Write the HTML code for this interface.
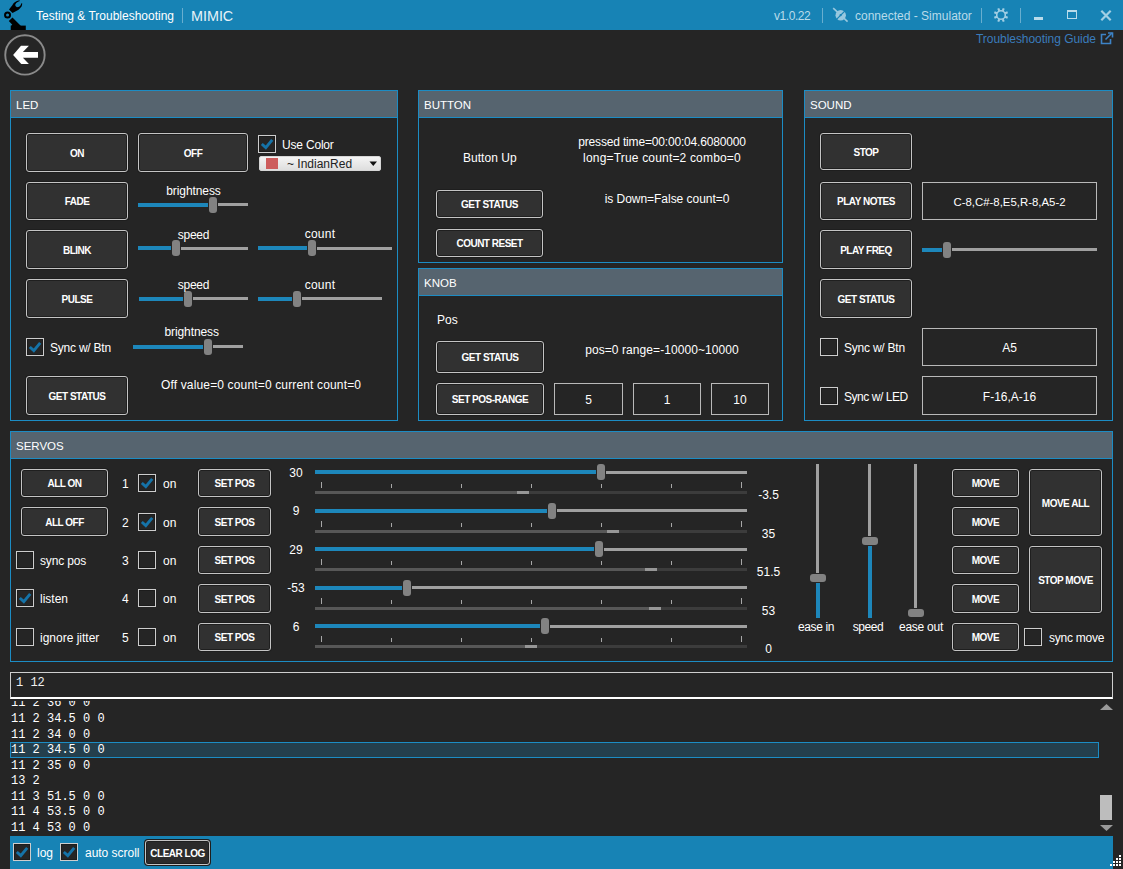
<!DOCTYPE html>
<html><head><meta charset="utf-8"><style>
html,body{margin:0;padding:0;}
body{width:1123px;height:869px;overflow:hidden;background:#252525;position:relative;font-family:"Liberation Sans",sans-serif;}
div{position:absolute;box-sizing:border-box;}
.t{line-height:0;white-space:nowrap;font-family:"Liberation Sans",sans-serif;}
.m{line-height:0;white-space:pre;font-family:"Liberation Mono",monospace;font-size:12px;}
.btn{border:1px solid #c4c4c4;border-radius:3px;background:#313131;box-shadow:0 0 0 1px #1e1e1e, inset 0 0 0 1px #1f1f1f;display:flex;align-items:center;justify-content:center;color:#fff;font-weight:bold;font-size:10px;letter-spacing:-0.5px;white-space:nowrap;}
.btn span{position:relative;top:1px;line-height:12px;}
.panel{border:1px solid #1c8cc4;}
.cb{width:18px;height:18px;border:1px solid #cdcdcd;background:#252525;box-shadow:inset 0 0 0 1px #1c1c1c;}
.tb{border:1px solid #b9b9b9;display:flex;align-items:center;justify-content:center;color:#ffffff;font-size:12px;white-space:nowrap;line-height:14px;padding-top:2px;}
.dd{border:1px solid #d6d6d6;border-radius:2px;background:linear-gradient(#f4f4f4,#dedede);}
</style></head>
<body>
<div style="left:0px;top:0px;width:1123px;height:30px;background:#1783b5;"></div>
<svg style="position:absolute;left:0;top:0" width="30" height="30" viewBox="0 0 30 30">
<g fill="#000">
<path d="M10.7 25.6 L25.8 25.6 L25.8 30 L10.7 30 Z"/>
<path d="M8.8 21 L12.5 17.5 L21 26 L11 26 L12.3 24.7 Z"/>
<circle cx="7.55" cy="15.1" r="2.5" fill="none" stroke="#000" stroke-width="2"/>
<path d="M12.52 13.07 L9.02 9.39 L12.70 4.79 L12.89 4.05 L14.73 2.21 L16.94 1.10 L19.33 0.29 L19.88 1.10 L18.04 1.84 L16.20 2.95 L15.28 4.42 L15.46 6.08 L16.94 7.18 L19.15 6.81 L20.62 5.15 L21.35 3.31 L22.28 3.50 L21.72 6.26 L20.07 8.28 L18.78 9.39 L18.59 9.76 Z"/>
</g></svg>
<div class="t" style="left:36px;top:16px;font-size:12px;color:#ffffff;letter-spacing:-0.004px;">Testing &amp; Troubleshooting</div>
<div style="left:182px;top:8px;width:1px;height:15px;background:rgba(255,255,255,0.35);"></div>
<div class="t" style="left:191px;top:16px;font-size:14.4px;color:#e6f2f8;letter-spacing:-0.025px;">MIMIC</div>
<div class="t" style="left:774px;top:16px;font-size:12px;color:#b9dbea;letter-spacing:-0.433px;">v1.0.22</div>
<div style="left:822px;top:8px;width:1px;height:15px;background:rgba(255,255,255,0.35);"></div>
<svg style="position:absolute;left:828px;top:4px" width="24" height="24" viewBox="0 0 24 24">
<g fill="#98c8df" stroke="none"><line x1="5.2" y1="4.1" x2="19.6" y2="17.7" stroke="#98c8df" stroke-width="1.6"/>
<circle cx="12.7" cy="11.3" r="5.2"/>
<line x1="17" y1="6.8" x2="8.3" y2="15.6" stroke="#1783b5" stroke-width="1.2"/>
<circle cx="12.6" cy="11.2" r="1.1" fill="#1783b5"/></g></svg>
<div class="t" style="left:855px;top:16px;font-size:12px;color:#b9dbea;letter-spacing:0.005px;">connected - Simulator</div>
<div style="left:981px;top:8px;width:1px;height:15px;background:rgba(255,255,255,0.35);"></div>
<svg style="position:absolute;left:988px;top:2px" width="26" height="26" viewBox="0 0 26 26">
<g fill="none" stroke="#a2cfe4"><circle cx="13" cy="13" r="4.3" stroke-width="1.6"/>
<path d="M14.68 8.93 L15.76 6.35 M17.07 11.32 L19.65 10.24 M17.07 14.68 L19.65 15.76 M14.68 17.07 L15.76 19.65 M11.32 17.07 L10.24 19.65 M8.93 14.68 L6.35 15.76 M8.93 11.32 L6.35 10.24 M11.32 8.93 L10.24 6.35 " stroke-width="2.1"/></g></svg>
<div style="left:1020px;top:8px;width:1px;height:15px;background:rgba(255,255,255,0.35);"></div>
<div style="left:1034px;top:17px;width:9px;height:3px;background:#b9dbea;"></div>
<div style="left:1067px;top:10px;width:10px;height:9px;box-sizing:border-box;border:1px solid #b9dbea;border-top-width:2px"></div>
<svg style="position:absolute;left:1100px;top:10px" width="12" height="11" viewBox="0 0 12 11">
<path d="M1.3 0.8 L10.7 10.2 M10.7 0.8 L1.3 10.2" stroke="#a2cfe4" stroke-width="2.2"/></svg>
<svg style="position:absolute;left:3px;top:33px" width="45" height="45" viewBox="0 0 45 45">
<circle cx="21.95" cy="21.9" r="19.7" fill="none" stroke="#8a8a8a" stroke-width="1.9"/>
<path d="M10.1 21.9 L18 12.7 L25.9 12.7 L19.9 18.9 L35 18.9 L35 24.8 L19.9 24.8 L25.9 31 L18.3 31 Z" fill="#fff"/></svg>
<div class="t" style="left:976px;top:39px;font-size:12px;color:#3a7cbc;letter-spacing:-0.050px;">Troubleshooting Guide</div>
<svg style="position:absolute;left:1100px;top:32px" width="14" height="13" viewBox="0 0 14 13">
<g fill="none" stroke="#3d83c6" stroke-width="1.6"><path d="M6 2.5 H1.5 V11.5 H10.5 V7"/><path d="M5.5 7.5 L12 1"/><path d="M8 1 H12.5 V5.5"/></g></svg>
<div class="panel" style="left:10px;top:90px;width:388px;height:331px;"></div>
<div style="left:11px;top:91px;width:386px;height:27px;background:#56646f;border-bottom:1px solid #1c8cc4"></div>
<div class="t" style="left:16px;top:105px;font-size:11.5px;color:#ffffff;">LED</div>
<div class="btn" style="left:26px;top:133px;width:102px;height:39px;"><span>ON</span></div>
<div class="btn" style="left:138px;top:133px;width:110px;height:39px;"><span>OFF</span></div>
<div class="cb" style="left:258px;top:135px;"><svg width="18" height="18" viewBox="0 0 18 18" style="position:absolute;left:-1px;top:-1px"><path d="M3.8 9.0 L7.8 12.6 L14.2 4.8" stroke="#1573a8" stroke-width="2.9" fill="none" stroke-linecap="butt"/></svg></div>
<div class="t" style="left:282px;top:145px;font-size:12px;color:#ffffff;letter-spacing:-0.188px;">Use Color</div>
<div class="dd" style="left:259px;top:156px;width:122px;height:15px;"></div>
<div style="left:266px;top:158px;width:12px;height:11px;background:#cd5c5c;"></div>
<div class="t dd-t" style="left:287px;top:164px;font-size:12px;color:#222222;">~ IndianRed</div>
<svg style="position:absolute;left:369px;top:161px" width="9" height="6" viewBox="0 0 9 6"><path d="M0.5 0.5 H8 L4.25 5 Z" fill="#111"/></svg>
<div class="btn" style="left:26px;top:182px;width:102px;height:38px;"><span>FADE</span></div>
<div style="left:138px;top:202.5px;width:70px;height:4px;background:#1d87bb;"></div>
<div style="left:218px;top:203.0px;width:30px;height:3px;background:#a0a0a0;"></div>
<div style="left:209px;top:196.5px;width:8px;height:16px;background:#828282;border-radius:3px"></div>
<div class="t" style="left:43.5px;top:191px;width:300px;text-align:center;font-size:12px;color:#ffffff;letter-spacing:-0.089px;">brightness</div>
<div class="btn" style="left:26px;top:230px;width:102px;height:39px;"><span>BLINK</span></div>
<div style="left:138px;top:246px;width:33px;height:4px;background:#1d87bb;"></div>
<div style="left:181px;top:246.5px;width:67px;height:3px;background:#a0a0a0;"></div>
<div style="left:172px;top:240px;width:8px;height:16px;background:#828282;border-radius:3px"></div>
<div class="t" style="left:43.5px;top:235px;width:300px;text-align:center;font-size:12px;color:#ffffff;letter-spacing:-0.275px;">speed</div>
<div style="left:258px;top:246px;width:49px;height:4px;background:#1d87bb;"></div>
<div style="left:317px;top:246.5px;width:75px;height:3px;background:#a0a0a0;"></div>
<div style="left:308px;top:240px;width:8px;height:16px;background:#828282;border-radius:3px"></div>
<div class="t" style="left:170px;top:234px;width:300px;text-align:center;font-size:12px;color:#ffffff;letter-spacing:0.250px;">count</div>
<div class="btn" style="left:26px;top:279px;width:102px;height:39px;"><span>PULSE</span></div>
<div style="left:139px;top:296.5px;width:44px;height:4px;background:#1d87bb;"></div>
<div style="left:193px;top:297.0px;width:55px;height:3px;background:#a0a0a0;"></div>
<div style="left:184px;top:290.5px;width:8px;height:16px;background:#828282;border-radius:3px"></div>
<div class="t" style="left:43.5px;top:285px;width:300px;text-align:center;font-size:12px;color:#ffffff;letter-spacing:-0.275px;">speed</div>
<div style="left:258px;top:296.5px;width:34px;height:4px;background:#1d87bb;"></div>
<div style="left:302px;top:297.0px;width:80px;height:3px;background:#a0a0a0;"></div>
<div style="left:293px;top:290.5px;width:8px;height:16px;background:#828282;border-radius:3px"></div>
<div class="t" style="left:170px;top:285px;width:300px;text-align:center;font-size:12px;color:#ffffff;letter-spacing:0.250px;">count</div>
<div class="cb" style="left:26px;top:338px;"><svg width="18" height="18" viewBox="0 0 18 18" style="position:absolute;left:-1px;top:-1px"><path d="M3.8 9.0 L7.8 12.6 L14.2 4.8" stroke="#1573a8" stroke-width="2.9" fill="none" stroke-linecap="butt"/></svg></div>
<div class="t" style="left:50px;top:348px;font-size:12px;color:#ffffff;letter-spacing:-0.220px;">Sync w/ Btn</div>
<div style="left:133px;top:344.5px;width:70px;height:4px;background:#1d87bb;"></div>
<div style="left:213px;top:345.0px;width:30px;height:3px;background:#a0a0a0;"></div>
<div style="left:204px;top:338.5px;width:8px;height:16px;background:#828282;border-radius:3px"></div>
<div class="t" style="left:41.69999999999999px;top:332px;width:300px;text-align:center;font-size:12px;color:#ffffff;letter-spacing:-0.089px;">brightness</div>
<div class="btn" style="left:26px;top:376px;width:102px;height:39px;"><span>GET STATUS</span></div>
<div class="t" style="left:161px;top:385px;font-size:12px;color:#ffffff;letter-spacing:0.150px;">Off value=0 count=0 current count=0</div>
<div class="panel" style="left:418px;top:90px;width:365px;height:173px;"></div>
<div style="left:419px;top:91px;width:363px;height:27px;background:#56646f;border-bottom:1px solid #1c8cc4"></div>
<div class="t" style="left:424px;top:105px;font-size:11.5px;color:#ffffff;">BUTTON</div>
<div class="t" style="left:463px;top:158px;font-size:12px;color:#ffffff;letter-spacing:0.025px;">Button Up</div>
<div class="t" style="left:512px;top:142px;width:300px;text-align:center;font-size:12px;color:#ffffff;letter-spacing:-0.175px;">pressed time=00:00:04.6080000</div>
<div class="t" style="left:512px;top:158px;width:300px;text-align:center;font-size:12px;color:#ffffff;letter-spacing:0.179px;">long=True count=2 combo=0</div>
<div class="t" style="left:517px;top:199px;width:300px;text-align:center;font-size:12px;color:#ffffff;letter-spacing:-0.035px;">is Down=False count=0</div>
<div class="btn" style="left:436px;top:190px;width:107px;height:28px;"><span>GET STATUS</span></div>
<div class="btn" style="left:436px;top:229px;width:107px;height:28px;"><span>COUNT RESET</span></div>
<div class="panel" style="left:418px;top:268px;width:365px;height:153px;"></div>
<div style="left:419px;top:269px;width:363px;height:27px;background:#56646f;border-bottom:1px solid #1c8cc4"></div>
<div class="t" style="left:424px;top:283px;font-size:11.5px;color:#ffffff;">KNOB</div>
<div class="t" style="left:437px;top:320px;font-size:12px;color:#ffffff;">Pos</div>
<div class="btn" style="left:436px;top:341px;width:108px;height:32px;"><span>GET STATUS</span></div>
<div class="t" style="left:512px;top:350px;width:300px;text-align:center;font-size:12px;color:#ffffff;letter-spacing:0.074px;">pos=0 range=-10000~10000</div>
<div class="btn" style="left:436px;top:383px;width:108px;height:32px;"><span>SET POS-RANGE</span></div>
<div class="tb" style="left:554px;top:383px;width:69px;height:32px;">5</div>
<div class="tb" style="left:633px;top:383px;width:68px;height:32px;">1</div>
<div class="tb" style="left:711px;top:383px;width:58px;height:32px;">10</div>
<div class="panel" style="left:804px;top:90px;width:309px;height:331px;"></div>
<div style="left:805px;top:91px;width:307px;height:27px;background:#56646f;border-bottom:1px solid #1c8cc4"></div>
<div class="t" style="left:810px;top:105px;font-size:11.5px;color:#ffffff;">SOUND</div>
<div class="btn" style="left:820px;top:133px;width:92px;height:37px;"><span>STOP</span></div>
<div class="btn" style="left:820px;top:182px;width:92px;height:38px;"><span>PLAY NOTES</span></div>
<div class="tb" style="left:922px;top:182px;width:175px;height:38px;"><span style="font-size:11.4px">C-8,C#-8,E5,R-8,A5-2</span></div>
<div class="btn" style="left:820px;top:230px;width:92px;height:39px;"><span>PLAY FREQ</span></div>
<div style="left:922px;top:247.5px;width:20px;height:4px;background:#1d87bb;"></div>
<div style="left:952px;top:248.0px;width:145px;height:3px;background:#a0a0a0;"></div>
<div style="left:943px;top:241.5px;width:8px;height:16px;background:#828282;border-radius:3px"></div>
<div class="btn" style="left:820px;top:279px;width:92px;height:39px;"><span>GET STATUS</span></div>
<div class="cb" style="left:820px;top:338px;"></div>
<div class="t" style="left:844px;top:348px;font-size:12px;color:#ffffff;letter-spacing:-0.220px;">Sync w/ Btn</div>
<div class="tb" style="left:922px;top:328px;width:175px;height:38px;">A5</div>
<div class="cb" style="left:820px;top:387px;"></div>
<div class="t" style="left:844px;top:397px;font-size:12px;color:#ffffff;letter-spacing:-0.440px;">Sync w/ LED</div>
<div class="tb" style="left:922px;top:376px;width:175px;height:39px;">F-16,A-16</div>
<div class="panel" style="left:10px;top:431px;width:1103px;height:231px;"></div>
<div style="left:11px;top:432px;width:1101px;height:27px;background:#56646f;border-bottom:1px solid #1c8cc4"></div>
<div class="t" style="left:16px;top:446px;font-size:11.5px;color:#ffffff;">SERVOS</div>
<div class="btn" style="left:21px;top:469px;width:87px;height:28px;"><span>ALL ON</span></div>
<div class="btn" style="left:21px;top:507px;width:87px;height:29px;"><span>ALL OFF</span></div>
<div class="cb" style="left:16px;top:551px;"></div>
<div class="t" style="left:40px;top:561px;font-size:12px;color:#ffffff;letter-spacing:-0.157px;">sync pos</div>
<div class="cb" style="left:16px;top:589px;"><svg width="18" height="18" viewBox="0 0 18 18" style="position:absolute;left:-1px;top:-1px"><path d="M3.8 9.0 L7.8 12.6 L14.2 4.8" stroke="#1573a8" stroke-width="2.9" fill="none" stroke-linecap="butt"/></svg></div>
<div class="t" style="left:40px;top:599px;font-size:12px;color:#ffffff;">listen</div>
<div class="cb" style="left:16px;top:628px;"></div>
<div class="t" style="left:40px;top:638px;font-size:12px;color:#ffffff;">ignore jitter</div>
<div class="t" style="left:122px;top:484px;font-size:12px;color:#ffffff;">1</div>
<div class="cb" style="left:138px;top:474px;"><svg width="18" height="18" viewBox="0 0 18 18" style="position:absolute;left:-1px;top:-1px"><path d="M3.8 9.0 L7.8 12.6 L14.2 4.8" stroke="#1573a8" stroke-width="2.9" fill="none" stroke-linecap="butt"/></svg></div>
<div class="t" style="left:163px;top:484px;font-size:12px;color:#ffffff;">on</div>
<div class="btn" style="left:198px;top:469px;width:73px;height:28px;"><span>SET POS</span></div>
<div class="t" style="left:146px;top:473px;width:300px;text-align:center;font-size:12px;color:#ffffff;">30</div>
<div style="left:315px;top:470px;width:281px;height:4px;background:#1d87bb;"></div>
<div style="left:606px;top:470.5px;width:141px;height:3px;background:#a0a0a0;"></div>
<div style="left:597px;top:464px;width:8px;height:16px;background:#828282;border-radius:3px"></div>
<div style="left:321px;top:482px;width:1px;height:6px;background:#a8a8a8;"></div>
<div style="left:391px;top:484px;width:1px;height:4px;background:#a8a8a8;"></div>
<div style="left:461px;top:484px;width:1px;height:4px;background:#a8a8a8;"></div>
<div style="left:531px;top:484px;width:1px;height:4px;background:#a8a8a8;"></div>
<div style="left:601px;top:484px;width:1px;height:4px;background:#a8a8a8;"></div>
<div style="left:671px;top:484px;width:1px;height:4px;background:#a8a8a8;"></div>
<div style="left:741px;top:482px;width:1px;height:6px;background:#a8a8a8;"></div>
<div style="left:315px;top:491px;width:202px;height:3px;background:#575757;"></div>
<div style="left:517px;top:491px;width:12px;height:3px;background:#969696;"></div>
<div style="left:529px;top:491px;width:218px;height:3px;background:#3c3c3c;"></div>
<div class="t" style="left:618.5px;top:495px;width:300px;text-align:center;font-size:12px;color:#ffffff;">-3.5</div>
<div class="t" style="left:122px;top:523px;font-size:12px;color:#ffffff;">2</div>
<div class="cb" style="left:138px;top:513px;"><svg width="18" height="18" viewBox="0 0 18 18" style="position:absolute;left:-1px;top:-1px"><path d="M3.8 9.0 L7.8 12.6 L14.2 4.8" stroke="#1573a8" stroke-width="2.9" fill="none" stroke-linecap="butt"/></svg></div>
<div class="t" style="left:163px;top:523px;font-size:12px;color:#ffffff;">on</div>
<div class="btn" style="left:198px;top:507px;width:73px;height:29px;"><span>SET POS</span></div>
<div class="t" style="left:146px;top:511px;width:300px;text-align:center;font-size:12px;color:#ffffff;">9</div>
<div style="left:315px;top:508.5px;width:232px;height:4px;background:#1d87bb;"></div>
<div style="left:557px;top:509.0px;width:190px;height:3px;background:#a0a0a0;"></div>
<div style="left:548px;top:502.5px;width:8px;height:16px;background:#828282;border-radius:3px"></div>
<div style="left:321px;top:520.5px;width:1px;height:6px;background:#a8a8a8;"></div>
<div style="left:391px;top:522.5px;width:1px;height:4px;background:#a8a8a8;"></div>
<div style="left:461px;top:522.5px;width:1px;height:4px;background:#a8a8a8;"></div>
<div style="left:531px;top:522.5px;width:1px;height:4px;background:#a8a8a8;"></div>
<div style="left:601px;top:522.5px;width:1px;height:4px;background:#a8a8a8;"></div>
<div style="left:671px;top:522.5px;width:1px;height:4px;background:#a8a8a8;"></div>
<div style="left:741px;top:520.5px;width:1px;height:6px;background:#a8a8a8;"></div>
<div style="left:315px;top:529.5px;width:292px;height:3px;background:#575757;"></div>
<div style="left:607px;top:529.5px;width:12px;height:3px;background:#969696;"></div>
<div style="left:619px;top:529.5px;width:128px;height:3px;background:#3c3c3c;"></div>
<div class="t" style="left:618.5px;top:534px;width:300px;text-align:center;font-size:12px;color:#ffffff;">35</div>
<div class="t" style="left:122px;top:561px;font-size:12px;color:#ffffff;">3</div>
<div class="cb" style="left:138px;top:551px;"></div>
<div class="t" style="left:163px;top:561px;font-size:12px;color:#ffffff;">on</div>
<div class="btn" style="left:198px;top:546px;width:73px;height:28px;"><span>SET POS</span></div>
<div class="t" style="left:146px;top:550px;width:300px;text-align:center;font-size:12px;color:#ffffff;">29</div>
<div style="left:315px;top:547px;width:279px;height:4px;background:#1d87bb;"></div>
<div style="left:604px;top:547.5px;width:143px;height:3px;background:#a0a0a0;"></div>
<div style="left:595px;top:541px;width:8px;height:16px;background:#828282;border-radius:3px"></div>
<div style="left:321px;top:559px;width:1px;height:6px;background:#a8a8a8;"></div>
<div style="left:391px;top:561px;width:1px;height:4px;background:#a8a8a8;"></div>
<div style="left:461px;top:561px;width:1px;height:4px;background:#a8a8a8;"></div>
<div style="left:531px;top:561px;width:1px;height:4px;background:#a8a8a8;"></div>
<div style="left:601px;top:561px;width:1px;height:4px;background:#a8a8a8;"></div>
<div style="left:671px;top:561px;width:1px;height:4px;background:#a8a8a8;"></div>
<div style="left:741px;top:559px;width:1px;height:6px;background:#a8a8a8;"></div>
<div style="left:315px;top:568px;width:330px;height:3px;background:#575757;"></div>
<div style="left:645px;top:568px;width:12px;height:3px;background:#969696;"></div>
<div style="left:657px;top:568px;width:90px;height:3px;background:#3c3c3c;"></div>
<div class="t" style="left:618.5px;top:572px;width:300px;text-align:center;font-size:12px;color:#ffffff;">51.5</div>
<div class="t" style="left:122px;top:599px;font-size:12px;color:#ffffff;">4</div>
<div class="cb" style="left:138px;top:589px;"></div>
<div class="t" style="left:163px;top:599px;font-size:12px;color:#ffffff;">on</div>
<div class="btn" style="left:198px;top:584px;width:73px;height:29px;"><span>SET POS</span></div>
<div class="t" style="left:146px;top:588px;width:300px;text-align:center;font-size:12px;color:#ffffff;">-53</div>
<div style="left:315px;top:585.5px;width:87px;height:4px;background:#1d87bb;"></div>
<div style="left:412px;top:586.0px;width:335px;height:3px;background:#a0a0a0;"></div>
<div style="left:403px;top:579.5px;width:8px;height:16px;background:#828282;border-radius:3px"></div>
<div style="left:321px;top:597.5px;width:1px;height:6px;background:#a8a8a8;"></div>
<div style="left:391px;top:599.5px;width:1px;height:4px;background:#a8a8a8;"></div>
<div style="left:461px;top:599.5px;width:1px;height:4px;background:#a8a8a8;"></div>
<div style="left:531px;top:599.5px;width:1px;height:4px;background:#a8a8a8;"></div>
<div style="left:601px;top:599.5px;width:1px;height:4px;background:#a8a8a8;"></div>
<div style="left:671px;top:599.5px;width:1px;height:4px;background:#a8a8a8;"></div>
<div style="left:741px;top:597.5px;width:1px;height:6px;background:#a8a8a8;"></div>
<div style="left:315px;top:606.5px;width:334px;height:3px;background:#575757;"></div>
<div style="left:649px;top:606.5px;width:12px;height:3px;background:#969696;"></div>
<div style="left:661px;top:606.5px;width:86px;height:3px;background:#3c3c3c;"></div>
<div class="t" style="left:618.5px;top:611px;width:300px;text-align:center;font-size:12px;color:#ffffff;">53</div>
<div class="t" style="left:122px;top:638px;font-size:12px;color:#ffffff;">5</div>
<div class="cb" style="left:138px;top:628px;"></div>
<div class="t" style="left:163px;top:638px;font-size:12px;color:#ffffff;">on</div>
<div class="btn" style="left:198px;top:623px;width:73px;height:28px;"><span>SET POS</span></div>
<div class="t" style="left:146px;top:627px;width:300px;text-align:center;font-size:12px;color:#ffffff;">6</div>
<div style="left:315px;top:624px;width:225px;height:4px;background:#1d87bb;"></div>
<div style="left:550px;top:624.5px;width:197px;height:3px;background:#a0a0a0;"></div>
<div style="left:541px;top:618px;width:8px;height:16px;background:#828282;border-radius:3px"></div>
<div style="left:321px;top:636px;width:1px;height:6px;background:#a8a8a8;"></div>
<div style="left:391px;top:638px;width:1px;height:4px;background:#a8a8a8;"></div>
<div style="left:461px;top:638px;width:1px;height:4px;background:#a8a8a8;"></div>
<div style="left:531px;top:638px;width:1px;height:4px;background:#a8a8a8;"></div>
<div style="left:601px;top:638px;width:1px;height:4px;background:#a8a8a8;"></div>
<div style="left:671px;top:638px;width:1px;height:4px;background:#a8a8a8;"></div>
<div style="left:741px;top:636px;width:1px;height:6px;background:#a8a8a8;"></div>
<div style="left:315px;top:645px;width:210px;height:3px;background:#575757;"></div>
<div style="left:525px;top:645px;width:12px;height:3px;background:#969696;"></div>
<div style="left:537px;top:645px;width:210px;height:3px;background:#3c3c3c;"></div>
<div class="t" style="left:618.5px;top:649px;width:300px;text-align:center;font-size:12px;color:#ffffff;">0</div>
<div style="left:816.0px;top:464px;width:3px;height:109px;background:#a0a0a0;"></div>
<div style="left:815.5px;top:583px;width:4px;height:35px;background:#1d87bb;"></div>
<div style="left:809.5px;top:574px;width:16px;height:8px;background:#828282;border-radius:3px"></div>
<div style="left:868.0px;top:464px;width:3px;height:72px;background:#a0a0a0;"></div>
<div style="left:867.5px;top:546px;width:4px;height:72px;background:#1d87bb;"></div>
<div style="left:861.5px;top:537px;width:16px;height:8px;background:#828282;border-radius:3px"></div>
<div style="left:914.0px;top:464px;width:3px;height:144px;background:#a0a0a0;"></div>
<div style="left:913.5px;top:618px;width:4px;height:0px;background:#1d87bb;"></div>
<div style="left:907.5px;top:609px;width:16px;height:8px;background:#828282;border-radius:3px"></div>
<div class="t" style="left:666px;top:627px;width:300px;text-align:center;font-size:12px;color:#ffffff;letter-spacing:-0.400px;">ease in</div>
<div class="t" style="left:718px;top:627px;width:300px;text-align:center;font-size:12px;color:#ffffff;letter-spacing:-0.475px;">speed</div>
<div class="t" style="left:771px;top:627px;width:300px;text-align:center;font-size:12px;color:#ffffff;letter-spacing:-0.243px;">ease out</div>
<div class="btn" style="left:952px;top:469px;width:67px;height:28px;"><span>MOVE</span></div>
<div class="btn" style="left:952px;top:507px;width:67px;height:29px;"><span>MOVE</span></div>
<div class="btn" style="left:952px;top:546px;width:67px;height:28px;"><span>MOVE</span></div>
<div class="btn" style="left:952px;top:584px;width:67px;height:29px;"><span>MOVE</span></div>
<div class="btn" style="left:952px;top:623px;width:67px;height:28px;"><span>MOVE</span></div>
<div class="btn" style="left:1029px;top:469px;width:73px;height:67px;"><span>MOVE ALL</span></div>
<div class="btn" style="left:1029px;top:546px;width:73px;height:67px;"><span>STOP MOVE</span></div>
<div class="cb" style="left:1024px;top:628px;"></div>
<div class="t" style="left:1049px;top:638px;font-size:12px;color:#ffffff;letter-spacing:-0.237px;">sync move</div>
<div style="left:10px;top:672px;width:1103px;height:27px;box-sizing:border-box;border:1px solid #cfcfcf;border-bottom:2px solid #ffffff;background:#252525"></div>
<div class="m" style="left:16px;top:683px;font-size:12px;color:#f0f0f0;">1 12</div>
<div style="left:10px;top:701px;width:1090px;height:135px;overflow:hidden">
<div style="left:0;top:41px;width:1089px;height:16px;box-sizing:border-box;border:1px solid #1c8cc4;background:#243f4d"></div>
<div class="m" style="left:1px;top:1.7px;color:#ffffff">11 2 36 0 0</div>
<div class="m" style="left:1px;top:18.2px;color:#ffffff">11 2 34.5 0 0</div>
<div class="m" style="left:1px;top:33.7px;color:#ffffff">11 2 34 0 0</div>
<div class="m" style="left:1px;top:49.2px;color:#ffffff">11 2 34.5 0 0</div>
<div class="m" style="left:1px;top:64.7px;color:#ffffff">11 2 35 0 0</div>
<div class="m" style="left:1px;top:80.2px;color:#ffffff">13 2</div>
<div class="m" style="left:1px;top:95.7px;color:#ffffff">11 3 51.5 0 0</div>
<div class="m" style="left:1px;top:111.2px;color:#ffffff">11 4 53.5 0 0</div>
<div class="m" style="left:1px;top:126.7px;color:#ffffff">11 4 53 0 0</div>
</div>
<svg style="position:absolute;left:1100px;top:703px" width="13" height="130" viewBox="0 0 13 130"><path d="M0 7 L6.5 1 L13 7 Z" fill="#9a9a9a"/><rect x="0" y="92" width="12" height="25" fill="#bdbdbd"/><path d="M0 122 L13 122 L6.5 128 Z" fill="#9a9a9a"/></svg>
<div style="left:10px;top:836px;width:1103px;height:33px;background:#1783b5;"></div>
<div class="cb" style="left:13px;top:843px;"><svg width="18" height="18" viewBox="0 0 18 18" style="position:absolute;left:-1px;top:-1px"><path d="M3.8 9.0 L7.8 12.6 L14.2 4.8" stroke="#1573a8" stroke-width="2.9" fill="none" stroke-linecap="butt"/></svg></div>
<div class="t" style="left:37px;top:853px;font-size:12px;color:#ffffff;">log</div>
<div class="cb" style="left:60px;top:843px;"><svg width="18" height="18" viewBox="0 0 18 18" style="position:absolute;left:-1px;top:-1px"><path d="M3.8 9.0 L7.8 12.6 L14.2 4.8" stroke="#1573a8" stroke-width="2.9" fill="none" stroke-linecap="butt"/></svg></div>
<div class="t" style="left:85px;top:853px;font-size:12px;color:#ffffff;letter-spacing:-0.020px;">auto scroll</div>
<div class="btn" style="left:145px;top:840px;width:65px;height:25px;background:#2b2b2b;"><span>CLEAR LOG</span></div>
<svg style="position:absolute;left:1110px;top:855px" width="12" height="12"><rect x="9" y="0" width="2" height="2" fill="#fff"/><rect x="6" y="3" width="2" height="2" fill="#fff"/><rect x="9" y="3" width="2" height="2" fill="#fff"/><rect x="3" y="6" width="2" height="2" fill="#fff"/><rect x="6" y="6" width="2" height="2" fill="#fff"/><rect x="9" y="6" width="2" height="2" fill="#fff"/><rect x="0" y="9" width="2" height="2" fill="#fff"/><rect x="3" y="9" width="2" height="2" fill="#fff"/><rect x="6" y="9" width="2" height="2" fill="#fff"/><rect x="9" y="9" width="2" height="2" fill="#fff"/></svg>
</body></html>
